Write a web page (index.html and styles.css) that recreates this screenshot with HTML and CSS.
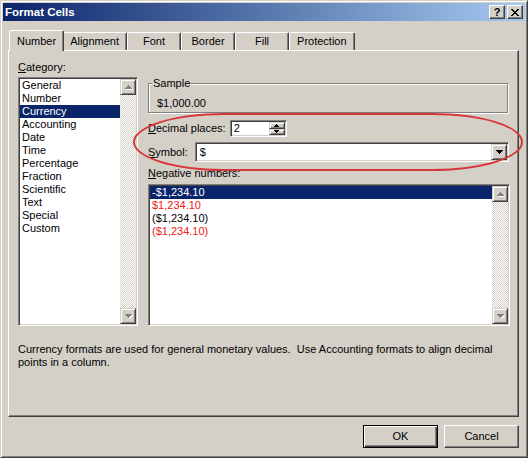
FILE: index.html
```html
<!DOCTYPE html>
<html>
<head>
<meta charset="utf-8">
<title>Format Cells</title>
<link rel="stylesheet" href="styles.css">
</head>
<body>
<div class="window">
  <div class="titlebar">
    <span class="title">Format Cells</span>
    <div class="caption-buttons">
      <span class="cap-btn help">?</span>
      <span class="cap-btn close"><svg width="8" height="7" viewBox="0 0 8 7" shape-rendering="crispEdges"><path d="M0 0h2v1h-2zM6 0h2v1h-2zM1 1h2v1h-2zM5 1h2v1h-2zM2 2h4v1h-4zM3 3h2v1h-2zM2 4h4v1h-4zM1 5h2v1h-2zM5 5h2v1h-2zM0 6h2v1h-2zM6 6h2v1h-2z"/></svg></span>
    </div>
  </div>
  <div class="dialog">
    <div class="tabs">
      <div class="tab selected">Number</div>
      <div class="tab">Alignment</div>
      <div class="tab">Font</div>
      <div class="tab">Border</div>
      <div class="tab">Fill</div>
      <div class="tab">Protection</div>
    </div>
    <div class="panel">
      <div class="main">
        <div class="category-col">
          <div class="label"><u>C</u>ategory:</div>
          <div class="listbox category-list">
            <div class="items">
              <div class="item">General</div>
              <div class="item">Number</div>
              <div class="item selected">Currency</div>
              <div class="item">Accounting</div>
              <div class="item">Date</div>
              <div class="item">Time</div>
              <div class="item">Percentage</div>
              <div class="item">Fraction</div>
              <div class="item">Scientific</div>
              <div class="item">Text</div>
              <div class="item">Special</div>
              <div class="item">Custom</div>
            </div>
            <div class="scrollbar">
              <div class="sb-btn"><svg class="dis" width="7" height="4" viewBox="0 0 7 4" shape-rendering="crispEdges"><path d="M3 0h1v1h1v1h1v1h1v1h-7v-1h1v-1h1v-1h1z"/></svg></div>
              <div class="sb-track"></div>
              <div class="sb-btn"><svg class="dis" width="7" height="4" viewBox="0 0 7 4" shape-rendering="crispEdges"><path d="M0 0h7v1h-1v1h-1v1h-1v1h-1v-1h-1v-1h-1v-1h-1z"/></svg></div>
            </div>
          </div>
        </div>
        <div class="options-col">
          <fieldset class="sample">
            <legend>Sample</legend>
            <div class="sample-value">$1,000.00</div>
          </fieldset>
          <div class="field-row decimal-row">
            <span class="field-label"><u>D</u>ecimal places:</span>
            <div class="spin">
              <span class="spin-value">2</span>
              <div class="spin-buttons">
                <div class="spin-btn"><svg width="5" height="3" viewBox="0 0 5 3" shape-rendering="crispEdges"><path d="M2 0h1v1h1v1h1v1h-5v-1h1v-1h1z"/></svg></div>
                <div class="spin-btn"><svg width="5" height="3" viewBox="0 0 5 3" shape-rendering="crispEdges"><path d="M0 0h5v1h-1v1h-1v1h-1v-1h-1v-1h-1z"/></svg></div>
              </div>
            </div>
          </div>
          <div class="field-row symbol-row">
            <span class="field-label"><u>S</u>ymbol:</span>
            <div class="combo">
              <span class="combo-value">$</span>
              <div class="combo-btn"><svg width="7" height="4" viewBox="0 0 7 4" shape-rendering="crispEdges"><path d="M0 0h7v1h-1v1h-1v1h-1v1h-1v-1h-1v-1h-1v-1h-1z"/></svg></div>
            </div>
          </div>
          <div class="label neg-label"><u>N</u>egative numbers:</div>
          <div class="listbox neg-list">
            <div class="items">
              <div class="item selected">-$1,234.10</div>
              <div class="item red">$1,234.10</div>
              <div class="item">($1,234.10)</div>
              <div class="item red">($1,234.10)</div>
            </div>
            <div class="scrollbar">
              <div class="sb-btn"><svg class="dis" width="7" height="4" viewBox="0 0 7 4" shape-rendering="crispEdges"><path d="M3 0h1v1h1v1h1v1h1v1h-7v-1h1v-1h1v-1h1z"/></svg></div>
              <div class="sb-track"></div>
              <div class="sb-btn"><svg class="dis" width="7" height="4" viewBox="0 0 7 4" shape-rendering="crispEdges"><path d="M0 0h7v1h-1v1h-1v1h-1v1h-1v-1h-1v-1h-1v-1h-1z"/></svg></div>
            </div>
          </div>
        </div>
      </div>
      <p class="description">Currency formats are used for general monetary values.&nbsp; Use Accounting formats to align decimal points in a column.</p>
    </div>
    <div class="buttons">
      <div class="btn default">OK</div>
      <div class="btn">Cancel</div>
    </div>
  </div>
  <div class="annotation"></div>
</div>
</body>
</html>
```

FILE: styles.css
```css
* { box-sizing: border-box; }
html, body { margin: 0; padding: 0; }
body {
  width: 528px;
  height: 458px;
  overflow: hidden;
  background: #d4d0c8;
  font: 11px/13px "Liberation Sans", Arial, sans-serif;
  color: #000;
}
u { text-decoration: underline; text-underline-offset: 1px; }

.window {
  position: relative;
  width: 528px;
  height: 458px;
  background: #d4d0c8;
  border: 1px solid;
  border-color: #d4d0c8 #404040 #404040 #d4d0c8;
  box-shadow: inset 1px 1px #fff, inset -1px -1px #808080;
  padding: 2px;
}

/* title bar */
.titlebar {
  height: 18px;
  display: flex;
  align-items: center;
  justify-content: space-between;
  padding: 0 2px;
  background: linear-gradient(to right, #0a246a, #a6caf0);
}
.title {
  color: #fff;
  font-weight: bold;
  font-size: 11.5px;
  line-height: 18px;
}
.caption-buttons { display: flex; gap: 2px; }
.cap-btn {
  width: 16px;
  height: 14px;
  display: flex;
  align-items: center;
  justify-content: center;
  background: #d4d0c8;
  border: 1px solid;
  border-color: #fff #404040 #404040 #fff;
  box-shadow: inset -1px -1px #808080;
}
.help { font-weight: bold; font-size: 11px; line-height: 12px; }

/* dialog body */
.dialog { padding: 9px 6px 0 5px; }

.tabs {
  position: relative;
  z-index: 1;
  display: flex;
  align-items: flex-end;
  height: 20px;
  padding-left: 3px;
}
.tab {
  height: 18px;
  min-width: 54px;
  padding: 2px 7px 0;
  text-align: center;
  white-space: nowrap;
  background: #d4d0c8;
  border: 1px solid;
  border-bottom: 0;
  border-color: #fff #404040 transparent #fff;
  border-radius: 2px 2px 0 0;
  box-shadow: inset -1px 0 #808080;
}
.tab.selected {
  position: relative;
  z-index: 1;
  height: 21px;
  margin: 0 -2px -1px;
  padding-top: 4px;
}

.panel {
  height: 367px;
  border: 1px solid;
  border-color: #fff #404040 #404040 #fff;
  box-shadow: inset -1px -1px #808080;
  padding: 10px 8px 0 9px;
}
.main {
  display: grid;
  grid-template-columns: 120px 362px;
  column-gap: 10px;
}
.category-col, .options-col { display: flex; flex-direction: column; }
.label { height: 13px; white-space: nowrap; }

/* list boxes */
.listbox {
  display: flex;
  background: #fff;
  border: 1px solid;
  border-color: #808080 #fff #fff #808080;
  box-shadow: inset 1px 1px #404040, inset -1px -1px #d4d0c8;
  padding: 1px;
}
.category-list { margin-top: 3px; height: 249px; }
.neg-list { margin-top: 4px; height: 142px; }
.items { flex: 1; min-width: 0; }
.item { height: 13px; padding-left: 2px; white-space: nowrap; }
.item.selected { background: #0a246a; color: #fff; }
.item.red { color: #f02020; }

.scrollbar {
  width: 16px;
  display: flex;
  flex-direction: column;
  background: repeating-conic-gradient(#fff 0 25%, #d4d0c8 0 50%) 0 0 / 2px 2px;
}
.sb-track { flex: 1; }
.sb-btn, .spin-btn, .combo-btn {
  display: flex;
  align-items: center;
  justify-content: center;
  background: #d4d0c8;
  border: 1px solid;
  border-color: #d4d0c8 #404040 #404040 #d4d0c8;
  box-shadow: inset 1px 1px #fff, inset -1px -1px #808080;
}
.sb-btn { width: 16px; height: 16px; }
.dis { fill: #808080; filter: drop-shadow(1px 1px 0 #fff); }

/* sample group */
.sample {
  margin: 16px 2px 0 0;
  padding: 7px 0 2px 8px;
  min-width: 0;
  border: 1px solid #808080;
  box-shadow: inset 1px 1px #fff, 1px 1px #fff;
}
.sample legend {
  margin-left: -5px;
  padding: 0 1px;
  line-height: 13px;
  background: #d4d0c8;
}
.sample-value { height: 13px; }

/* fields */
.field-row { display: flex; align-items: center; gap: 7px; }
.field-label { white-space: nowrap; }
.decimal-row { margin-top: 7px; height: 17px; gap: 4px; }
.symbol-row { margin-top: 5px; height: 20px; }

.spin, .combo {
  display: flex;
  background: #fff;
  border: 1px solid;
  border-color: #808080 #fff #fff #808080;
  box-shadow: inset 1px 1px #404040, inset -1px -1px #d4d0c8;
  padding: 1px;
}
.spin { width: 57px; height: 17px; }
.spin-value { flex: 1; padding-left: 2px; line-height: 13px; }
.spin-buttons { width: 16px; display: flex; flex-direction: column; }
.spin-btn { flex: 1; }

.combo { flex: 1; height: 20px; margin-right: 1px; }
.combo-value { flex: 1; padding-left: 3px; line-height: 16px; }
.combo-btn { width: 16px; height: 16px; }

.neg-label { margin-top: 5px; }

.description { margin: 17px 0 0; }

/* buttons */
.buttons {
  display: flex;
  justify-content: flex-end;
  gap: 6px;
  margin-top: 8px;
}
.btn {
  width: 75px;
  height: 23px;
  display: flex;
  align-items: center;
  justify-content: center;
  border: 1px solid;
  border-color: #fff #404040 #404040 #fff;
  box-shadow: inset -1px -1px #808080;
}
.btn.default {
  border-color: #000;
  box-shadow: inset 1px 1px #fff, inset -1px -1px #404040, inset -2px -2px #808080;
}

/* red annotation circle drawn over the dialog */
.annotation {
  position: absolute;
  left: 132px;
  top: 112px;
  width: 390px;
  height: 58px;
  border: 2px solid #d6363a;
  border-radius: 90px / 50%;
  pointer-events: none;
}
```
